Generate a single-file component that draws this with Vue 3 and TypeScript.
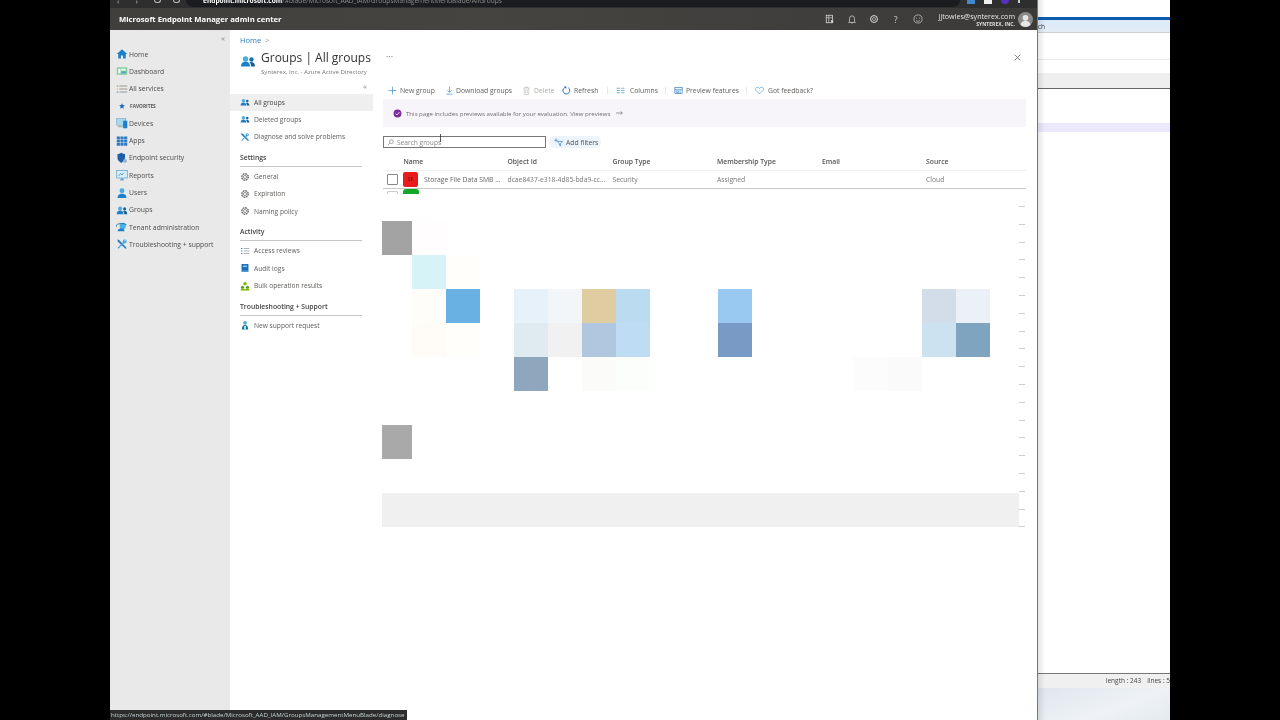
<script setup lang="ts">
const g: Record<string, string> = {
  home: '<path d="M8 1.500 1 8h2v6h3.600v-4h2.800v4H13V8h2z" fill="#1b7fcc"/>',
  dash: '<rect x="1" y="3" width="14" height="10" fill="#7fcf9f"/><rect x="3" y="5" width="3" height="6" fill="#fff"/><rect x="7" y="5" width="6" height="2.400" fill="#fff"/><rect x="7" y="8.600" width="6" height="2.400" fill="#4aa8d8"/>',
  all: '<path d="M4.500 4H15M4.500 8H15M4.500 12H15" stroke="#8a8886" stroke-width="1.100"/><path d="M1 4h2" stroke="#57a300" stroke-width="1.200"/><path d="M1 8h2" stroke="#e8a33d" stroke-width="1.200"/><path d="M1 12h2" stroke="#1b7fcc" stroke-width="1.200"/>',
  star: '<path d="m8 2.500 1.700 3.700 4 .4-3 2.700.9 4L8 11.300l-3.600 2 .9-4-3-2.700 4-.4z" fill="#1b6ec2"/>',
  devices: '<rect x="1" y="2" width="12" height="9" fill="#a8d8f0" stroke="#6a9fc0" stroke-width=".7"/><rect x="9.500" y="5" width="5.500" height="10" fill="#1b7fcc"/><path d="M3 13h6" stroke="#8a8886"/>',
  apps: '<path d="M1 2h4.200v3.600H1zM5.900 2h4.200v3.600H5.900zM10.800 2H15v3.600h-4.200zM1 6.300h4.200v3.600H1zM5.900 6.300h4.200v3.600H5.900zM10.800 6.300H15v3.600h-4.200zM1 10.600h4.200v3.600H1zM5.900 10.600h4.200v3.600H5.900zM10.800 10.600H15v3.600h-4.200z" fill="#2f78c4"/>',
  shield: '<path d="M7 1c2 1.200 3.400 1.600 5 1.700v5.100C12 11 10 13 7 14.500 4 13 2 11 2 7.800V2.700C3.600 2.600 5 2.200 7 1z" fill="#1f5fa8"/><circle cx="12" cy="12" r="2.600" fill="#9ab4cc"/>',
  reports: '<rect x="1" y="2" width="14" height="10" fill="#d9eef8" stroke="#4c9ac9" stroke-width=".9"/><path d="M3.500 9.500 6 6l2 2 2.500-3" fill="none" stroke="#3c84b4"/><path d="M8 12v2.500M5.500 14.500h5" stroke="#3c84b4" stroke-width="1.200"/>',
  user: '<circle cx="8" cy="5" r="3.300" fill="#48aee0"/><path d="M2 14.500c0-4 2.600-5.500 6-5.500s6 1.500 6 5.500z" fill="#1b7fcc"/>',
  groups: '<circle cx="5.500" cy="6" r="2.700" fill="#48aee0"/><path d="M1 13.500c0-3.400 2-4.700 4.500-4.700s4.500 1.300 4.500 4.700z" fill="#1b7fcc"/><circle cx="11.500" cy="6.500" r="2.200" fill="#1b6ea8"/><path d="M10.500 9c3 0 4.500 1.200 4.500 4.500h-4c0-2-.2-3.200-1.500-4z" fill="#145f94"/>',
  tenant: '<circle cx="9" cy="6.500" r="4.200" fill="#4bb2e5"/><path d="M2 13.500c.5-2.700 3-4 5-4s4 1 4.500 4z" fill="#1b7fcc"/><path d="M1 8a7 3 0 0 1 13-3" fill="none" stroke="#1b6ea8" stroke-width="1.100"/>',
  tools: '<path d="m2 2 2.200.5 9.500 10 .3 1.800-1.800-.2-10-9.600z" fill="#2a7fc0"/><path d="M14 2.500 11.800 4.700l-.8-.7L13 1.700A3.500 3.500 0 0 0 9 6.200L2 13l1.200 1.300L10 7.300a3.500 3.500 0 0 0 4-4.800z" fill="#43a5dc"/>',
  gear: '<circle cx="8" cy="8" r="2.500" fill="none" stroke="#605e5c" stroke-width="1.100"/><circle cx="8" cy="8" r="5.300" fill="none" stroke="#605e5c" stroke-width="1.900" stroke-dasharray="2.100 2.070"/><circle cx="8" cy="8" r="5" fill="none" stroke="#605e5c" stroke-width=".8"/>',
  review: '<path d="M6 4h9M6 8h9M6 12h9" stroke="#8a8886" stroke-width="1"/><path d="M1.500 4h2.500M1.500 8h2.500M1.500 12h2.500" stroke="#2b88d8" stroke-width="1.500"/>',
  book: '<path d="M2.500 1.500h10a1 1 0 0 1 1 1v12h-10a1 1 0 0 1-1-1z" fill="#1b6fb5"/><path d="M5 4h6v2.500H5z" fill="#8fcdf0"/><path d="M2.500 13h11" stroke="#a9d6f2"/>',
  bulk: '<circle cx="8" cy="4.500" r="2.800" fill="#7fba00"/><circle cx="4" cy="10" r="2.500" fill="#5c9a1f"/><circle cx="12" cy="10" r="2.500" fill="#5c9a1f"/><path d="M1 15c0-2 1-3 3-3s3 1 4 1 2-1 4-1 3 1 3 3z" fill="#7fba00"/>',
  support: '<circle cx="8" cy="4.500" r="3" fill="#50b0d8"/><path d="M3 15c0-5 2-7 5-7s5 2 5 7z" fill="#147a94"/><path d="M6.500 9.500h3V15h-3z" fill="#bfe6f2"/>',
  plus: '<path d="M8 1v14M1 8h14" stroke="#2f80c8" stroke-width="1.100"/>',
  down: '<path d="M8 1v10M4 7.500 8 11.500l4-4M2.500 14.500h11" fill="none" stroke="#2f80c8" stroke-width="1.100"/>',
  trash: '<path d="M3 3.500h10M6 3.500V2h4v1.500M4 3.500V15h8V3.500M6.500 6v7M9.500 6v7" fill="none" stroke="#b3b0ad" stroke-width="1"/>',
  refresh: '<path d="M4.500 3a6 6 0 1 0 6.500 0" fill="none" stroke="#1d6fb8" stroke-width="1.700"/><path d="M3 .8h4.500v4.500z" fill="#1d6fb8"/>',
  cols: '<path d="M1 4h6M1 8h6M1 12h6M9 4h6M9 8h6M9 12h6" stroke="#2f80c8" stroke-width="1.100"/>',
  preview: '<rect x="1.500" y="3" width="13" height="10.500" fill="none" stroke="#1d6fb8" stroke-width="1.100"/><path d="M1.500 6h13M4 8.500h4v3H4z" fill="none" stroke="#1d6fb8"/><path d="M9.500 8.500h3M9.500 11h3" stroke="#1d6fb8"/>',
  heart: '<path d="M8 14 2 8c-2.200-2.400-.5-5.700 2.300-5.700C6 2.300 7.300 3.300 8 4.400c.7-1.100 2-2.100 3.700-2.100C14.500 2.300 16.200 5.600 14 8z" fill="none" stroke="#2f80c8" stroke-width="1"/>',
  filter: '<path d="M6 6h9l-3.500 4v4l-2-1.300V10zM3.500 1v6M.5 4h6" fill="none" stroke="#2f80c8" stroke-width="1.200"/>',
  bPortal: '<rect x="2" y="2" width="10" height="12" fill="none" stroke="#e0e0e0" stroke-width="1.200"/><path d="M2 6h10M6 2v12" stroke="#e0e0e0"/><path d="m9 9 5 3-2 1-1 2z" fill="#e0e0e0"/>',
  bell: '<path d="M4 12V7a4 4 0 0 1 8 0v5l1.500 1.500h-11zM6.800 14.500h2.400" fill="none" stroke="#ddd" stroke-width="1.100"/>',
  hGear: '<circle cx="8" cy="8" r="2.400" fill="none" stroke="#ddd" stroke-width="1"/><circle cx="8" cy="8" r="5.500" fill="none" stroke="#ddd" stroke-width="1.600"/>',
  smile: '<circle cx="8" cy="8" r="6.500" fill="none" stroke="#ddd" stroke-width="1"/><path d="M5 6.500h1.500M9.500 6.500H11M5 10.500c1.800 1.500 4.200 1.500 6 0" fill="none" stroke="#ddd"/>',
}

const nav = [
  ['home', 'Home'], ['dash', 'Dashboard'], ['all', 'All services'], ['star', 'FAVORITES'],
  ['devices', 'Devices'], ['apps', 'Apps'], ['shield', 'Endpoint security'], ['reports', 'Reports'],
  ['user', 'Users'], ['groups', 'Groups'], ['tenant', 'Tenant administration'], ['tools', 'Troubleshooting + support'],
]

const menu = [
  { items: [['groups', 'All groups'], ['groups', 'Deleted groups'], ['tools', 'Diagnose and solve problems']] },
  { title: 'Settings', items: [['gear', 'General'], ['gear', 'Expiration'], ['gear', 'Naming policy']] },
  { title: 'Activity', items: [['review', 'Access reviews'], ['book', 'Audit logs'], ['bulk', 'Bulk operation results']] },
  { title: 'Troubleshooting + Support', items: [['support', 'New support request']] },
]

const tools = [
  { i: 'plus', t: 'New group', w: 57, gap: 3 },
  { i: 'down', t: 'Download groups', w: 77, gap: 2 },
  { i: 'trash', t: 'Delete', w: 40, gap: 3, off: true },
  { i: 'refresh', t: 'Refresh', w: 54, gap: 3, sep: true },
  { i: 'cols', t: 'Columns', w: 58, gap: 5, sep: true },
  { i: 'preview', t: 'Preview features', w: 81, gap: 3, sep: true },
  { i: 'heart', t: 'Got feedback?', w: 70, gap: 4 },
]

const heads = ['Name', 'Object Id', 'Group Type', 'Membership Type', 'Email', 'Source']
const cells = ['', 'dcae8437-e318-4d85-bda9-cc...', 'Security', 'Assigned', '', 'Cloud']

const blocks: [number, number, string][] = [
  [1, 1, '#a3a3a3'], [1, 2, '#fffdfe'], [2, 2, '#d6f4f8'], [2, 3, '#fffefb'],
  [3, 2, '#fffdf9'], [3, 3, '#69b1e3'], [3, 5, '#e6f1fa'], [3, 6, '#f2f6f9'], [3, 7, '#dfcca0'], [3, 8, '#badbf0'],
  [3, 11, '#99c8f0'], [3, 17, '#d2dde9'], [3, 18, '#ebf1f6'],
  [4, 2, '#fffcf8'], [4, 3, '#fffefa'], [4, 5, '#dfeaf1'], [4, 6, '#f1f1f1'], [4, 7, '#b1c7e0'], [4, 8, '#bedcf3'],
  [4, 11, '#7a9ac6'], [4, 17, '#cde2f1'], [4, 18, '#7fa4bf'],
  [5, 5, '#8fa7bd'], [5, 7, '#fbfbfa'], [5, 8, '#fcfefb'], [5, 15, '#fcfcfc'], [5, 16, '#fbfafa'],
  [7, 1, '#a9a9a9'],
]
const ticks = Array.from({ length: 19 })
</script>

<template>
  <div class="stage">
    <div class="browser">
      <div class="chrome">
        <div class="back"><span>‹</span><span>›</span><i></i><i></i></div>
        <div class="url">
          <span class="addr"><b>endpoint.microsoft.com</b>/#blade/Microsoft_AAD_IAM/GroupsManagementMenuBlade/AllGroups</span>
          <i class="s1"></i><i class="s2"></i>
        </div>
        <div class="ext">
          <i class="e2"></i><i class="e3"></i><i class="e4"></i><i class="e5"></i>
        </div>
      </div>
      <header class="topbar">
        <span class="brand">Microsoft Endpoint Manager admin center</span>
        <div class="tb-icons">
          <svg viewBox="0 0 16 16" v-html="g.bPortal"></svg>
          <svg viewBox="0 0 16 16" v-html="g.bell"></svg>
          <svg viewBox="0 0 16 16" v-html="g.hGear"></svg>
          <span class="q">?</span>
          <svg viewBox="0 0 16 16" v-html="g.smile"></svg>
        </div>
        <div class="acct">
          <span class="mail">jjtowles@synterex.com</span>
          <span class="org">SYNTEREX, INC.</span>
        </div>
        <div class="avatar">
          <svg viewBox="0 0 16 16"><circle cx="8" cy="6.200" r="3" fill="#e6e6e6" /><path d="M2.500 14c.5-3.500 2.800-4.800 5.500-4.800s5 1.300 5.500 4.800a8 8 0 0 1-11 0z" fill="#e6e6e6" /></svg>
        </div>
      </header>
      <div class="body">
        <aside class="nav">
          <div class="collapse outer">«</div>
          <div v-for="n in nav" :key="n[1]" class="nav-row" :class="{ fav: n[0] === 'star' }">
            <svg viewBox="0 0 16 16" v-html="g[n[0]]"></svg>
            <span>{{ n[1] }}</span>
          </div>
        </aside>
        <main class="main">
          <div class="crumb">Home <em>&gt;</em></div>
          <div class="content">
            <section class="blade">
              <div class="title-row">
                <svg class="title-ico" viewBox="0 0 16 16" v-html="g.groups"></svg>
                <div>
                  <h1>Groups | All groups</h1>
                  <p>Synterex, Inc. - Azure Active Directory</p>
                </div>
              </div>
              <div class="collapse inner">«</div>
              <template v-for="(s, si) in menu" :key="si">
                <h2 v-if="s.title">{{ s.title }}</h2>
                <div v-for="it in s.items" :key="it[1]" class="menu-row" :class="{ sel: it[1] === 'All groups' }">
                  <svg viewBox="0 0 16 16" v-html="g[it[0]]"></svg>
                  <span>{{ it[1] }}</span>
                </div>
              </template>
            </section>
            <section class="work">
              <div class="head-icons">
                <span class="dots">···</span>
                <svg class="close" viewBox="0 0 10 10"><path d="m1 1 8 8M9 1 1 9" stroke="#444" stroke-width=".9" /></svg>
              </div>
              <div class="toolbar">
                <div v-for="t in tools" :key="t.t" class="tool" :class="{ off: t.off, sep: t.sep }" :style="{ width: t.w + 'px', gap: t.gap + 'px' }">
                  <svg viewBox="0 0 16 16" v-html="g[t.i]"></svg>
                  <span>{{ t.t }}</span>
                </div>
              </div>
              <div class="banner">
                <svg viewBox="0 0 16 16"><circle cx="8" cy="8" r="7" fill="#7a2b9e" /><path d="m4.500 8 2.500 2.500 4.500-5" fill="none" stroke="#fff" stroke-width="1.500" /></svg>
                <span>This page includes previews available for your evaluation. View previews</span>
                <svg class="arrow" viewBox="0 0 10 8"><path d="M0 4h9M6.500 1.500 9 4 6.500 6.500" fill="none" stroke="#555" stroke-width=".8" /></svg>
              </div>
              <div class="filters">
                <div class="search">
                  <svg viewBox="0 0 16 16"><circle cx="10" cy="6" r="4.500" fill="none" stroke="#666" stroke-width="1.300" /><path d="M6.500 9.500 2 14" stroke="#666" stroke-width="1.300" /></svg>
                  <span>Search groups</span>
                  <i class="caret">I</i>
                </div>
                <div class="pill">
                  <svg viewBox="0 0 16 16" v-html="g.filter"></svg>
                  <span>Add filters</span>
                </div>
              </div>
              <div class="row thead">
                <span v-for="h in heads" :key="h">{{ h }}</span>
              </div>
              <div class="row tbody">
                <template v-for="(c, i) in cells" :key="i">
                  <span v-if="i === 0" class="name">
                    <i class="check"></i><i class="sf">SF</i><span>Storage File Data SMB ...</span>
                  </span>
                  <span v-else>{{ c }}</span>
                </template>
              </div>
              <div class="peek"><i class="check"></i><i class="green"></i></div>
              <div class="mosaic-wrap">
                <div class="mosaic">
                  <i v-for="(b, i) in blocks" :key="i" :style="{ gridRow: b[0], gridColumn: b[1], background: b[2] }"></i>
                  <i class="band"></i>
                </div>
                <div class="ticks"><i v-for="(_, i) in ticks" :key="i"></i></div>
              </div>
            </section>
          </div>
          <div class="status">https://endpoint.microsoft.com/#blade/Microsoft_AAD_IAM/GroupsManagementMenuBlade/diagnose</div>
        </main>
      </div>
    </div>
    <div class="side">
      <div class="s-top"></div>
      <div class="s-tab">ch</div>
      <div class="s-white a"></div>
      <div class="s-grey"></div>
      <div class="s-white b"></div>
      <div class="s-lilac"></div>
      <div class="s-white c"></div>
      <div class="s-status"><span>length : 243</span><span>lines : 5</span></div>
      <div class="s-desk"></div>
    </div>
  </div>
</template>

<style>
html, body { margin: 0; background: #000; }
</style>

<style scoped>
.stage { width: 1060px; height: 720px; margin-left: 110px; display: flex; overflow: hidden; font-family: "Open Sans", "Noto Sans", sans-serif; color: #605e5c; filter: blur(.35px); }
.browser { width: 927px; flex: none; display: flex; flex-direction: column; background: #fff; }
.chrome { height: 8px; flex: none; background: #2e2e2f; position: relative; overflow: hidden; display: flex; color: #bbb; font-size: 8px; }
.back { padding-left: 7px; width: 76px; box-sizing: border-box; flex: none; display: flex; gap: 16px; line-height: 2px; }
.back i { display: block; width: 7px; height: 3px; border: 1px solid #bbb; border-top: 0; box-sizing: border-box; border-radius: 0 0 3px 3px; }
.back i:last-child { margin-left: -4px; }
.url { width: 774px; height: 7px; background: #1b1c1f; border-radius: 0 0 7px 7px; position: relative; flex: none; display: flex; }
.addr { font-size: 6.600px; line-height: 1px; color: #8c8c8c; padding-left: 17px; white-space: nowrap; overflow: hidden; width: 600px; flex: none; }
.addr b { color: #fff; font-weight: 700; }
.url i { display: block; height: 2px; background: #999; }
.s1 { width: 3px; margin-left: 148px; }
.s2 { width: 4px; margin-left: 13px; }
.ext { display: flex; gap: 9px; padding-left: 7px; }
.ext i { display: block; width: 8px; height: 4px; background: #bbb; }
.ext .e2 { background: #3d8ad0; }
.ext .e3 { background: #eee; }
.ext .e4 { background: #5a2fc2; border-radius: 0 0 5px 5px; }
.ext .e5 { background: #ccc; width: 2px; height: 3px; }
.topbar { height: 22px; flex: none; background: linear-gradient(90deg, #403f3c, #454440 40%, #3b3a39); display: flex; align-items: center; color: #fff; }
.brand { font-size: 7.700px; font-weight: 700; padding-left: 9px; white-space: nowrap; }
.tb-icons { margin-left: auto; display: flex; align-items: center; gap: 12px; }
.tb-icons svg { width: 10px; height: 10px; display: block; }
.q { width: 10px; text-align: center; font-size: 9px; color: #ccc; }
.acct { display: flex; flex-direction: column; align-items: flex-end; margin-left: 16px; line-height: 8.500px; padding-top: 2px; }
.mail { font-size: 7.150px; color: #e8e8e8; }
.org { font-size: 5.100px; font-weight: 700; color: #ddd; }
.avatar { width: 15px; height: 15px; border-radius: 50%; background: #8a8a8a; margin: 0 4px 0 3px; overflow: hidden; }
.avatar svg { display: block; width: 15px; height: 15px; }
.body { flex: 1; display: flex; min-height: 0; }
.nav { width: 120px; flex: none; background: #e9e9e9; padding-top: 6px; box-sizing: border-box; }
.collapse { text-align: right; font-size: 8px; line-height: 3px; color: #8a8886; padding-right: 5px; }
.collapse.outer { height: 9.500px; }
.nav-row { height: 17.300px; display: flex; align-items: center; gap: 1px; padding-left: 6px; font-size: 6.800px; color: #4f4e4d; white-space: nowrap; }
.nav-row svg { width: 12px; height: 12px; flex: none; }
.nav-row.fav { font-size: 4.800px; font-weight: 700; color: #555; padding-left: 8px; gap: 4px; }
.nav-row.fav svg { width: 8px; height: 8px; }
.main { flex: 1; min-width: 0; display: flex; flex-direction: column; position: relative; }
.crumb { height: 20px; padding: 5px 0 0 10px; box-sizing: border-box; font-size: 7.500px; line-height: 10px; color: #2b7cc0; }
.crumb em { font-style: normal; color: #a19f9d; margin-left: 2px; }
.content { flex: 1; display: flex; min-height: 0; }
.blade { width: 143px; flex: none; }
.title-row { display: flex; align-items: flex-start; gap: 5px; padding-left: 10px; height: 31px; }
.title-ico { width: 16px; height: 16px; margin-top: 3px; flex: none; }
.title-row h1 { margin: 0; font-size: 12px; font-weight: 400; line-height: 15px; color: #323130; white-space: nowrap; }
.title-row p { margin: 3px 0 0; font-size: 6.100px; line-height: 7px; color: #777; white-space: nowrap; }
.inner { padding-right: 6px; height: 3px; margin-top: 3px; margin-bottom: 6.500px; }
.menu-row { height: 17.300px; display: flex; align-items: center; gap: 4px; padding-left: 10px; font-size: 6.650px; white-space: nowrap; color: #605e5c; }
.menu-row svg { width: 10px; height: 10px; flex: none; }
.menu-row.sel { background: #efefef; color: #444; }
h2 { margin: 7.500px 11px 1px 10px; padding-bottom: 3px; font-size: 6.800px; line-height: 10px; font-weight: 600; color: #444; border-bottom: 1px solid #c8c6c4; white-space: nowrap; }
.work { flex: 1; min-width: 0; padding: 0 11px 0 10px; position: relative; }
.head-icons { position: absolute; left: 13px; right: 16px; top: 0; display: flex; justify-content: space-between; align-items: center; }
.dots { font-size: 9px; color: #666; }
.close { width: 7px; height: 7px; margin-top: 2px; }
.toolbar { display: flex; height: 17px; padding: 32px 0 0 5px; align-items: center; }
.tool { display: flex; align-items: center; font-size: 6.800px; flex: none; white-space: nowrap; color: #605e5c; position: relative; }
.tool svg { width: 9px; height: 9px; flex: none; }
.tool.off { color: #b3b0ad; }
.tool.sep::after { content: ""; position: absolute; right: 8px; top: 1px; bottom: 1px; width: 1px; background: #e6e6e6; }
.banner { height: 28px; background: #f7f4fa; display: flex; align-items: center; gap: 4px; padding-left: 10px; font-size: 6.100px; color: #706e6c; }
.banner svg { width: 9px; height: 9px; flex: none; }
.banner .arrow { width: 7px; height: 6px; margin-left: 2px; }
.filters { display: flex; align-items: center; gap: 3px; margin-top: 8px; height: 14px; }
.search { width: 163px; height: 12px; box-sizing: border-box; border: 1px solid #777; display: flex; align-items: center; gap: 3px; padding-left: 3px; font-size: 6.600px; color: #8a8886; position: relative; }
.search svg { width: 7px; height: 7px; }
.caret { position: absolute; left: 55px; top: -5px; font-size: 10px; line-height: 12px; font-style: normal; color: #333; }
.pill { height: 12px; width: 52px; border-radius: 6px; background: #edf4fb; display: flex; align-items: center; gap: 3px; padding-left: 5px; font-size: 6.800px; box-sizing: border-box; flex: none; color: #555; }
.pill svg { width: 9px; height: 9px; flex: none; }
.row { display: grid; align-items: center; }
.thead { height: 18px; margin-top: 4px; padding-left: 20.500px; grid-template-columns: 104px 105px 104.500px 105px 104px 1fr; font-size: 6.800px; font-weight: 600; color: #555; border-bottom: 1px solid #f1f1f1; box-sizing: border-box; }
.tbody { height: 18px; grid-template-columns: 124.500px 105px 104.500px 105px 104px 1fr; font-size: 6.750px; color: #777; border-bottom: 1px solid #c8c8c8; box-sizing: border-box; white-space: nowrap; }
.name { display: flex; align-items: center; }
.check { display: block; width: 9px; height: 9px; border: 1px solid #8a8886; border-radius: 1px; margin-left: 4px; box-sizing: content-box; flex: none; }
.sf { display: block; width: 15px; height: 15px; margin-left: 5px; border-radius: 2px; background: #e81c1c; color: #7a1010; font-size: 5.500px; font-style: normal; font-weight: 600; line-height: 15px; text-align: center; flex: none; }
.name span { margin-left: 6px; font-size: 6.800px; color: #666; }
.peek { height: 5px; overflow: hidden; display: flex; }
.peek .check { border-color: #ccc; margin-top: 2px; }
.green { display: block; width: 16px; height: 5px; margin-left: 5px; background: #12a828; border-radius: 3px 3px 0 0; }
.mosaic-wrap { display: flex; height: 340px; align-items: flex-start; }
.mosaic { width: 637px; flex: none; display: grid; grid-template-columns: 30px repeat(18, 34px); grid-auto-rows: 34px; margin: 27px 0 0 -1px; }
.mosaic i { display: block; }
.mosaic .band { grid-row: 9; grid-column: 1 / 20; background: #f0f0f0; width: 637px; }
.ticks { display: flex; flex-direction: column; gap: 16.800px; padding-top: 12px; flex: none; }
.ticks i { display: block; width: 6px; height: 1px; background: #cfcfcf; }
.status { position: absolute; left: -120px; bottom: 0; height: 10px; width: 297px; background: #2b2b2b; color: #c4d4d4; font-size: 6.180px; line-height: 10px; padding-left: 1px; box-sizing: border-box; white-space: nowrap; overflow: hidden; }
.side { width: 133px; flex: none; display: flex; flex-direction: column; background: #fff; position: relative; }
.side::after { content: ""; position: absolute; inset: 0 auto 0 0; width: 8px; border-left: 1px solid #777; box-sizing: border-box; background: linear-gradient(90deg, rgba(0, 0, 0, .1), rgba(0, 0, 0, 0)); }
.s-top { height: 20px; flex: none; box-sizing: border-box; border-bottom: 3px solid #0a5cad; }
.s-tab { height: 13px; flex: none; box-sizing: border-box; background: linear-gradient(#dceaf8, #e2ecf6); font-size: 6.500px; line-height: 13px; color: #334; padding-left: 1px; border-bottom: 1px solid #cfcfcf; }
.s-white.a { height: 27px; flex: none; box-sizing: border-box; border-bottom: 1px solid #e8e8e8; }
.s-grey { height: 16px; flex: none; margin-top: 13px; background: #efefef; border-bottom: 1px solid #666; box-sizing: border-box; }
.s-white.b { height: 34px; flex: none; }
.s-lilac { height: 9px; flex: none; background: #ebe8fb; }
.s-white.c { flex: 1; box-sizing: border-box; border-bottom: 1px solid #777; }
.s-status { height: 14px; flex: none; background: #f0f0f0; display: flex; justify-content: flex-end; gap: 6px; font-size: 6.500px; line-height: 14px; color: #444; white-space: nowrap; overflow: hidden; }
.s-desk { height: 32px; flex: none; background: linear-gradient(160deg, #dfe6ec, #eef2f6 60%, #e4eaef); }
</style>
